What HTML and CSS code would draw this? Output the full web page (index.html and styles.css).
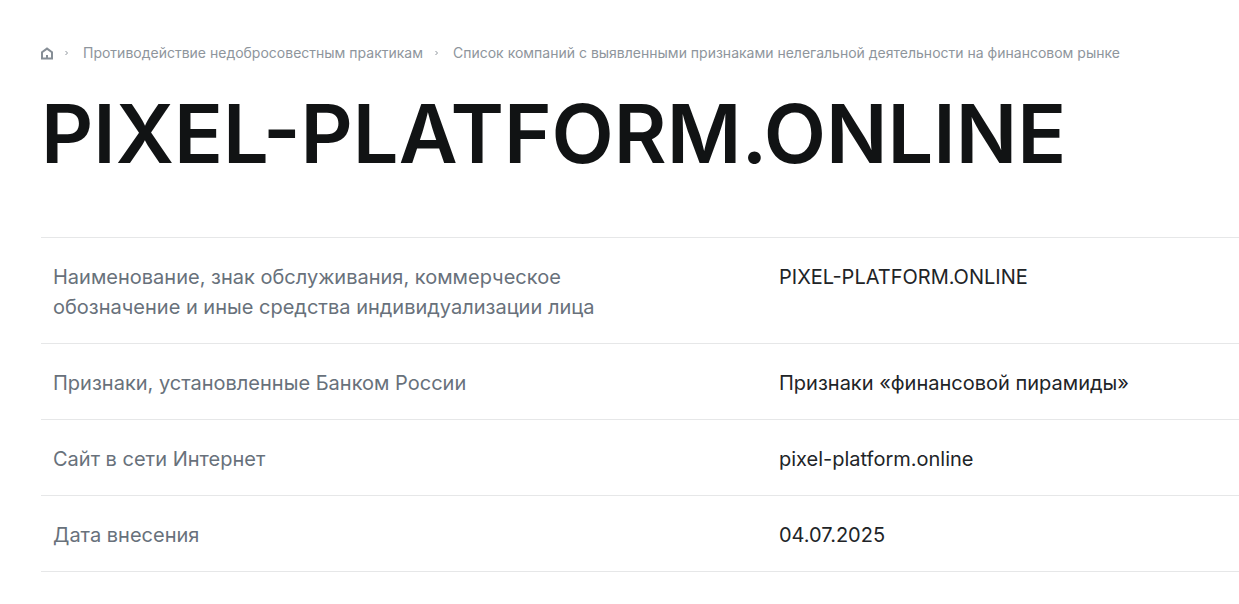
FILE: index.html
```
<!DOCTYPE html>
<html lang="ru">
<head>
<meta charset="utf-8">
<meta name="viewport" content="width=device-width, initial-scale=1">
<title>PIXEL-PLATFORM.ONLINE</title>
<link rel="stylesheet" href="styles.css">
</head>
<body>
<main class="page">
  <nav class="breadcrumbs" aria-label="Навигация">
    <a class="crumb-home" href="#" aria-label="Главная">
      <svg class="home-icon" viewBox="0 0 12 13" aria-hidden="true"><path d="M1 5.3 6 1.6l5 3.7V11.5H1z" /><path d="M6 8v3" /></svg>
    </a>
    <svg class="separator" viewBox="0 0 4 6" aria-hidden="true"><path d="M0.5 1l2 2-2 2" /></svg>
    <a class="crumb" href="#">Противодействие недобросовестным практикам</a>
    <svg class="separator" viewBox="0 0 4 6" aria-hidden="true"><path d="M0.5 1l2 2-2 2" /></svg>
    <a class="crumb" href="#">Список компаний с выявленными признаками нелегальной деятельности на финансовом рынке</a>
  </nav>
  <h1 class="title">PIXEL-PLATFORM.ONLINE</h1>
  <table class="details">
    <tbody>
      <tr><th scope="row">Наименование, знак обслуживания, коммерческое<br>обозначение и иные средства индивидуализации лица</th><td>PIXEL-PLATFORM.ONLINE</td></tr>
      <tr><th scope="row">Признаки, установленные Банком России</th><td>Признаки «финансовой пирамиды»</td></tr>
      <tr><th scope="row">Сайт в сети Интернет</th><td>pixel-platform.online</td></tr>
      <tr><th scope="row">Дата внесения</th><td>04.07.2025</td></tr>
    </tbody>
  </table>
</main>
</body>
</html>
```
FILE: styles.css
```
body {
  margin: 0;
  background: #fff;
  color: #111314;
  font-family: Inter, "Noto Sans", sans-serif;
}
.page {
  padding: 43px 0 32px 41px;
}
.breadcrumbs {
  display: flex;
  align-items: center;
  height: 20px;
  font-size: 14px;
  line-height: 20px;
  white-space: nowrap;
}
.crumb-home {
  display: flex;
}
.home-icon {
  width: 12px;
  height: 13px;
  fill: none;
  stroke: #868e96;
  stroke-width: 2;
}
.separator {
  width: 4px;
  height: 6px;
  margin: 0 14px 0 12px;
  fill: none;
  stroke: #8e959c;
}
.crumb {
  color: #8e959c;
  text-decoration: none;
}
.title {
  margin: 22px 0 54px;
  font-size: 81px;
  font-weight: 600;
  line-height: 98px;
  white-space: nowrap;
}
.details {
  width: 100%;
  border-collapse: collapse;
  table-layout: fixed;
  font-size: 20px;
  line-height: 30px;
}
.details tr {
  border-top: 1px solid #e6e7e8;
  border-bottom: 1px solid #e6e7e8;
}
.details th,
.details td {
  padding: 24px 12px 21px;
  font-weight: 400;
  text-align: left;
  vertical-align: top;
}
.details th {
  width: 60.6%;
  box-sizing: border-box;
  color: #68717b;
}
.details td {
  color: #212427;
}
```
